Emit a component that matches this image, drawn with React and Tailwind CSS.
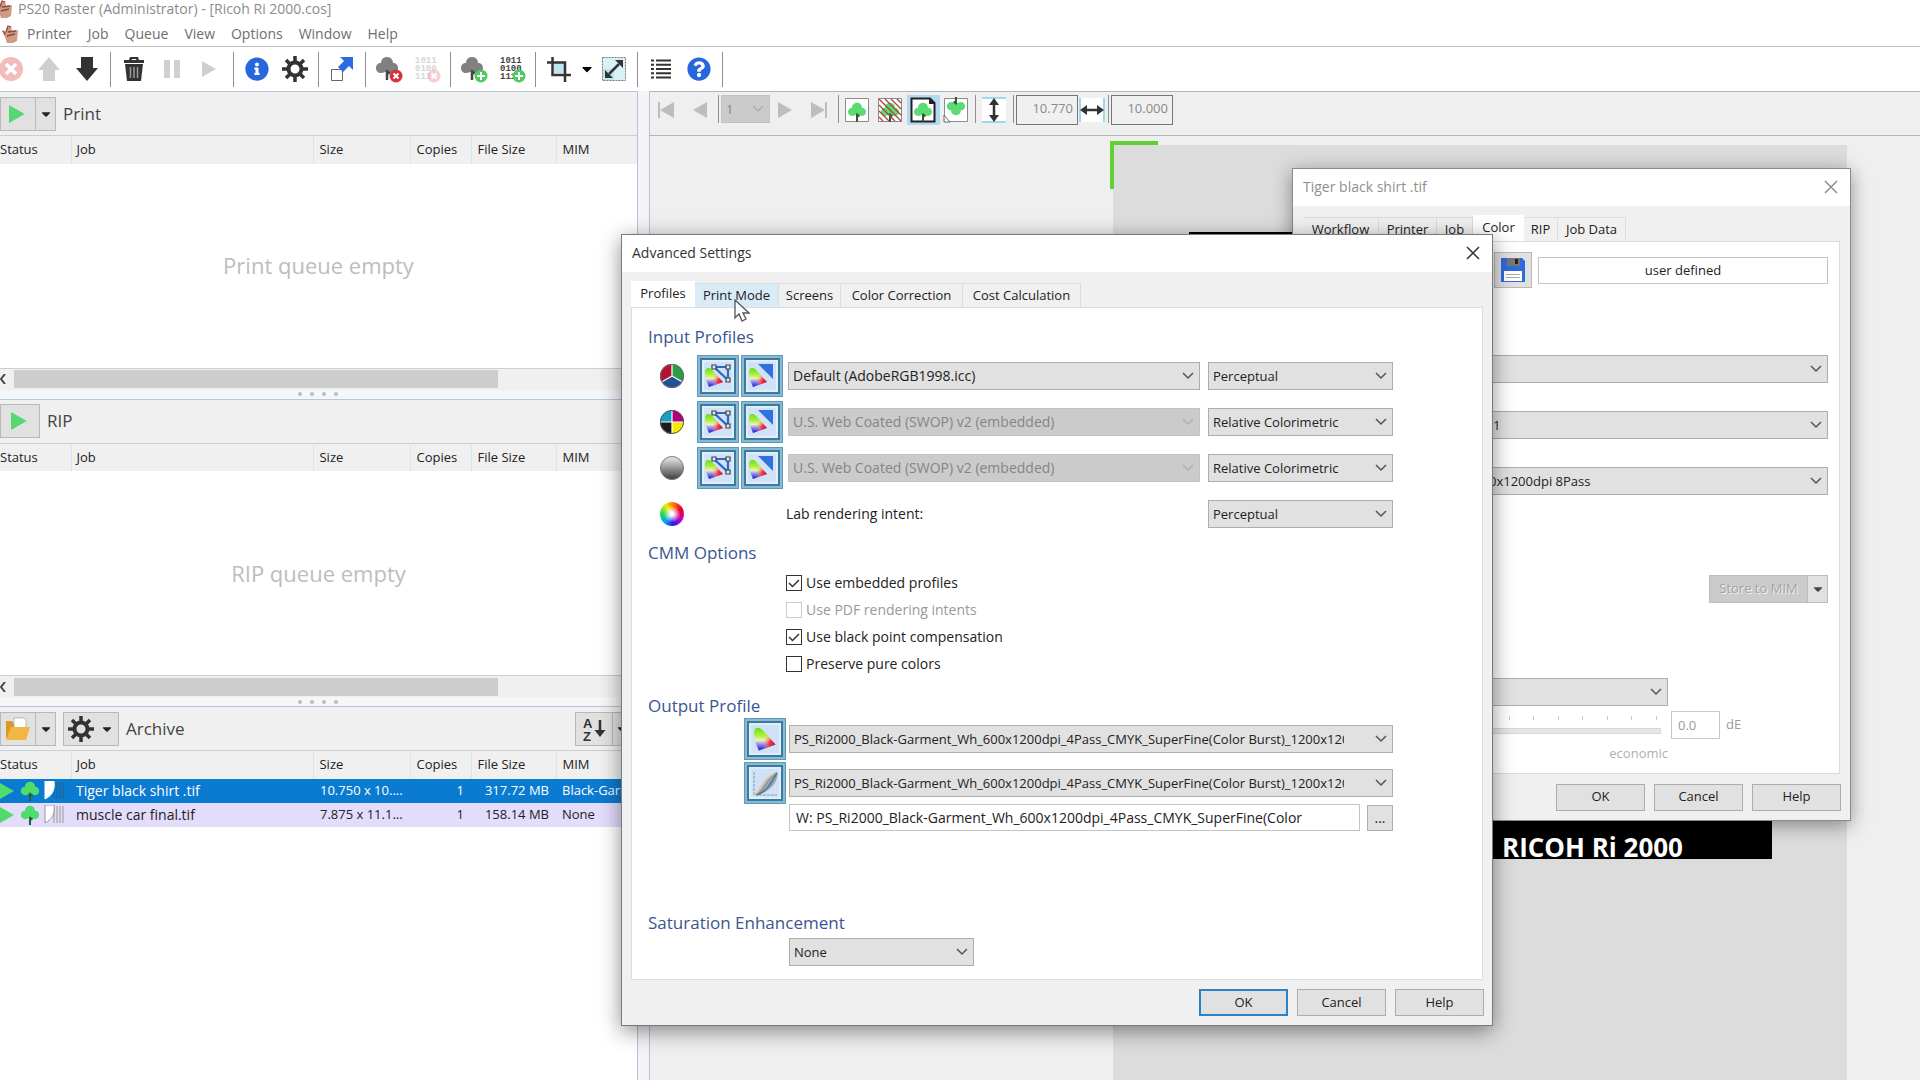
import React from "react";
import { FaInfoCircle, FaQuestionCircle, FaCaretDown } from "react-icons/fa";
import clsx from "clsx";

const PROFILE = "PS_Ri2000_Black-Garment_Wh_600x1200dpi_4Pass_CMYK_SuperFine(Color Burst)_1200x1200";

const inputProfiles = [
  { id: "rgb", name: "Default (AdobeRGB1998.icc)", intent: "Perceptual" },
  { id: "cmyk", name: "U.S. Web Coated (SWOP) v2 (embedded)", intent: "Relative Colorimetric", disabled: true },
  { id: "gray", name: "U.S. Web Coated (SWOP) v2 (embedded)", intent: "Relative Colorimetric", disabled: true },
];

const cmmOptions = [
  { id: "embedded", label: "Use embedded profiles", checked: true },
  { id: "pdf", label: "Use PDF rendering intents", disabled: true },
  { id: "blackpoint", label: "Use black point compensation", checked: true },
  { id: "pure", label: "Preserve pure colors" },
];

const archiveJobs = [
  { name: "Tiger black shirt .tif", size: "10.750 x 10....", copies: 1, fileSize: "317.72 MB", mim: "Black-Garment", selected: true },
  { name: "muscle car final.tif", size: "7.875 x 11.1...", copies: 1, fileSize: "158.14 MB", mim: "None" },
];

/* ---------- icons ---------- */

const AppIcon = () => (
  <svg viewBox="0 0 20 20" className="h-5 w-5 shrink-0">
    <path d="M2 7l4 1 1-5 4-1 1 5 6-1-1 11-4 2H7L5 13z" fill="#d09a84" />
    <path d="M6 8l2-6 3 1M7 12l8-2M8 8l8-1" stroke="#8a4a3b" strokeWidth="1.300" fill="none" />
    <path d="M2 6l4 2-1 4z" fill="#a45c4a" />
  </svg>
);

const BigArrow = ({ down, color }) => (
  <svg viewBox="0 0 24 26" className={clsx("h-[26px] w-6", down && "rotate-180")}>
    <path d="M12 1l11 13h-5v11H6V14H1z" fill={color} />
  </svg>
);

const CancelIcon = () => (
  <svg viewBox="0 0 26 26" className="h-[26px] w-[26px]">
    <circle cx="13" cy="13" r="12" fill="#f1bcbc" />
    <path d="M8 8l10 10M18 8L8 18" stroke="#fff" strokeWidth="3.500" />
  </svg>
);

const PauseIcon = () => (
  <svg viewBox="0 0 20 20" className="h-5 w-5">
    <path d="M2 1h6v18H2zM12 1h6v18h-6z" fill="#d0d0d0" />
  </svg>
);

const Triangle = ({ color, className = "h-4 w-4", left, bar }) => (
  <svg viewBox="0 0 16 16" className={clsx(className, left && "rotate-180")}>
    <path d="M0 0l14 8-14 8z" fill={color} />
    {bar && <path d="M14 0h2v16h-2z" fill={color} />}
  </svg>
);

const TrashIcon = () => (
  <svg viewBox="0 0 24 26" className="h-[26px] w-6">
    <path d="M8 1h8l1 3h5v3H2V4h5zM10 3l-.4 1h4.8L14 3z" fill="#333" />
    <path d="M3 8h18l-2 17H5z" fill="#333" />
    <path d="M8.500 11v11M12 11v11M15.500 11v11" stroke="#999" strokeWidth="1.500" />
  </svg>
);

const GearIcon = () => (
  <svg viewBox="0 0 26 26" className="h-[26px] w-[26px]">
    <circle cx="13" cy="13" r="6.500" fill="none" stroke="#333" strokeWidth="4" />
    <path
      d="M13 0v5M13 21v5M0 13h5M21 13h5M4 4l4 4M18 18l4 4M22 4l-4 4M8 18l-4 4"
      stroke="#333"
      strokeWidth="3.500"
    />
  </svg>
);

const PopOutIcon = () => (
  <svg viewBox="0 0 24 26" className="h-[26px] w-6">
    <path d="M1.500 13.500h11v11h-11z" fill="#fff" stroke="#666" />
    <path d="M10 1h13v13l-4-4-6 6-5-5 6-6z" fill="#2f6be0" />
  </svg>
);

const Badge = ({ kind, faded }) => (
  <g opacity={faded ? 0.5 : 1}>
    <circle cx="20" cy="20" r="6.500" fill={kind === "add" ? "#4fcb63" : faded ? "#f0a0a8" : "#d3343f"} />
    {kind === "add" ? (
      <path d="M20 16v8M16 20h8" stroke="#fff" strokeWidth="2" />
    ) : (
      <path d="M17.500 17.500l5 5M22.500 17.500l-5 5" stroke="#fff" strokeWidth="2" />
    )}
  </g>
);

const TreeShape = ({ fill, trunk = "#444" }) => (
  <>
    <path
      d="M11 1c4 0 6 3 6 6 3 0 5 2 5 5s-2 5-5 5c-2 0-4-1-6-2-2 1-4 2-6 2-3 0-5-2-5-5s2-5 5-5c0-3 2-6 6-6z"
      fill={fill}
    />
    <path d="M11 24V14M11 18l3-2" stroke={trunk} strokeWidth="2.500" />
  </>
);

const TreeBadgeIcon = ({ kind }) => (
  <svg viewBox="0 0 27 27" className="h-[27px] w-[27px]">
    <TreeShape fill="#808080" />
    <Badge kind={kind} />
  </svg>
);

const BinaryIcon = ({ kind, faded }) => (
  <svg viewBox="0 0 27 27" className="h-[27px] w-[27px]">
    <g fill={faded ? "#d6d6d6" : "#444"} fontFamily="Liberation Mono, monospace" fontSize="9" fontWeight="bold">
      <text x="1" y="7">1011</text>
      <text x="1" y="15">0100</text>
      <text x="1" y="23">111</text>
    </g>
    <Badge kind={kind} faded={faded} />
  </svg>
);

const CropIcon = () => (
  <svg viewBox="0 0 26 26" className="h-[26px] w-[26px]">
    <path d="M8 6h11v11H8z" fill="#bde6ee" />
    <path d="M6.500 1v18H25M1 6.500h18V26" fill="none" stroke="#333" strokeWidth="2.500" />
  </svg>
);

const FitIcon = () => (
  <svg viewBox="0 0 26 26" className="h-[26px] w-[26px]">
    <path d="M1.500 1.500h23v23h-23z" fill="#d9f1f6" stroke="#777" strokeDasharray="2 1" />
    <path d="M2 13h11v11H2z" fill="#bde6ee" />
    <path d="M8 18L18 8" stroke="#333" strokeWidth="2.500" />
    <path d="M14 4h8v8zM4 14v8h8z" fill="#333" />
  </svg>
);

const ListIcon = () => (
  <svg viewBox="0 0 20 20" className="h-5 w-5">
    <path d="M0 1.500h3M0 5.750h3M0 10h3M0 14.250h3M0 18.500h3M5 1.500h15M5 5.750h15M5 10h15M5 14.250h15M5 18.500h15" stroke="#333" strokeWidth="2" />
  </svg>
);

const PageTreeIcon = ({ variant }) => (
  <svg viewBox="0 0 26 26" className="h-[26px] w-[26px]">
    <path
      d={variant === "page" ? "M1.500 1.500H20l4.500 4.500v18.500h-23z" : "M1.500 1.500h23v23h-23z"}
      fill="#fff"
      stroke={variant === "page" ? "#222" : "#8b8b8b"}
      strokeWidth={variant === "page" ? 2 : 1}
    />
    <g transform={variant === "flip" ? "translate(22 19) rotate(180) scale(.82)" : "translate(4 5) scale(.82)"}>
      <TreeShape fill="#5bdc72" trunk="#345539" />
    </g>
    {variant === "page" && <path d="M19 1v6h6z" fill="#222" />}
    {variant === "flip" && <path d="M1 18l6 7H1z" fill="#fff" stroke="#666" />}
    {variant === "hatch" && (
      <path
        d="M2 2l22 22M8 2l16 16M14 2l10 10M20 2l4 4M2 8l16 16M2 14l10 10M2 20l4 4"
        stroke="#a8463c"
        strokeWidth="1.300"
      />
    )}
  </svg>
);

const MeasureIcon = ({ horizontal }) => (
  <svg viewBox="0 0 26 26" className={clsx("h-[26px] w-[26px]", horizontal && "rotate-90")}>
    <path d="M1 0h24v26H1z" fill="#fff" />
    <path d="M1 1h24M1 25h24" stroke="#7fcde6" strokeWidth="1.500" />
    <path d="M13 5v16" stroke="#333" strokeWidth="2.500" />
    <path d="M13 1l5 7H8zM13 25l5-7H8z" fill="#333" />
  </svg>
);

const FolderIcon = () => (
  <svg viewBox="0 0 26 24" className="h-6 w-[26px]">
    <path d="M1 4h6l2 3h12v14H1z" fill="#d99a2b" />
    <path d="M9 1h10l2 2v10H9z" fill="#fff" stroke="#999" strokeWidth=".6" />
    <path d="M6 10h19l-4 13H1z" fill="#f3b544" />
  </svg>
);

const SortIcon = () => (
  <svg viewBox="0 0 24 26" className="h-[26px] w-6">
    <g fill="#333" fontFamily="Liberation Sans, sans-serif" fontSize="13" fontWeight="bold">
      <text x="1" y="12">A</text>
      <text x="1" y="25">Z</text>
    </g>
    <path d="M18 4v13" stroke="#333" strokeWidth="2.500" />
    <path d="M12.500 14h11L18 21z" fill="#333" />
  </svg>
);

const StatusIcons = ({ selected }) => (
  <span className="flex items-center gap-1">
    <Triangle color="#4fdc6a" />
    <svg viewBox="0 0 22 24" className="h-5 w-5">
      <TreeShape fill="#4fdc6a" trunk="#24632f" />
    </svg>
    <svg viewBox="0 0 20 20" className="h-5 w-5">
      <path d="M10 1v17M13 1v17M16 1v17M19 1v17" stroke={selected ? "#25608f" : "#999"} />
      <path d="M1 0h9c1 8-1 14-9 18z" fill="#fff" stroke={selected ? "#fff" : "#999"} />
    </svg>
  </span>
);

const SaveIcon = () => (
  <svg viewBox="0 0 26 26" className="h-[26px] w-[26px]">
    <path d="M1 1h21l3 3v21H1z" fill="#2f6bdc" />
    <path d="M7 1h13v8H7z" fill="#777" />
    <path d="M15 2h3v5h-3z" fill="#222" />
    <path d="M4 14h18v10H4z" fill="#fff" />
    <path d="M6 17.500h14M6 20.500h14" stroke="#aaa" />
  </svg>
);

const FAN = "M0 9c0-3 1-5 3-5 3 0 4 2 6 4l9 10-14 5C2 18 0 14 0 9z";

const GamutIcon = ({ id, variant }) => (
  <svg viewBox="0 0 26 24" className="h-6 w-[26px] overflow-visible">
    <defs>
      <linearGradient id={`${id}-base`} x1="0.300" y1="0" x2="0.300" y2="1">
        <stop offset="0" stopColor="#5fe01f" />
        <stop offset=".35" stopColor="#b4f03c" />
        <stop offset=".55" stopColor="#e8f4c0" />
        <stop offset=".75" stopColor="#8a7bf2" />
        <stop offset="1" stopColor="#1714d0" />
      </linearGradient>
      <radialGradient id={`${id}-red`} gradientUnits="userSpaceOnUse" cx="18" cy="18" r="11">
        <stop offset="0" stopColor="#e00b2c" />
        <stop offset=".45" stopColor="#f0304a" />
        <stop offset="1" stopColor="#ffb26b" stopOpacity="0" />
      </radialGradient>
    </defs>
    <g transform={variant ? undefined : "translate(2 -4) scale(1.200)"}>
      <path d={FAN} fill={`url(#${id}-base)`} />
      <path d={FAN} fill={`url(#${id}-red)`} />
    </g>
    {variant === "points" && (
      <>
        <path d="M9 3h14v13z" fill="none" stroke="#2b68c8" strokeWidth="2.200" />
        <path d="M7 1h4v4H7zM21 1h4v4h-4zM21 14h4v4h-4z" fill="#dce9f6" stroke="#444" strokeWidth="1.200" />
      </>
    )}
    {variant === "corner" && <path d="M9 0h15v15z" fill="#3170dd" />}
  </svg>
);

const CurveIcon = () => (
  <svg viewBox="0 0 28 28" className="h-7 w-7">
    <path d="M3 3v23h23" fill="none" stroke="#8b98a5" strokeDasharray="3 1" />
    <path d="M4 26C12 21 13 10 26 3c2 9-6 19-17 22z" fill="#9aa8b5" />
    <path d="M4 26C11 19 12 9 26 3" fill="none" stroke="#d3c68c" strokeWidth="1.300" />
    <path d="M5 26C13 21 15 11 26 4" fill="none" stroke="#b07f88" />
    <path d="M6 26C17 22 21 12 26 4" fill="none" stroke="#4d7796" strokeWidth="1.500" />
  </svg>
);

const ModeIcon = ({ id }) => {
  if (id === "lab") {
    return (
      <span className="h-6 w-6 rounded-full bg-[radial-gradient(circle,#ffffff_8%,transparent_50%),conic-gradient(#ff8a00,#f00020_60deg,#d000b0_115deg,#3018e8_175deg,#00a8f0_220deg,#20d850_270deg,#e8f000_325deg,#ff8a00)]" />
    );
  }
  return (
    <svg viewBox="0 0 24 24" className="h-6 w-6">
      <defs>
        <linearGradient id="ball" x1="0" y1="0" x2="0" y2="1">
          <stop offset="0" stopColor="#eee" />
          <stop offset="1" stopColor="#3d3d3d" />
        </linearGradient>
      </defs>
      {id === "gray" && <circle cx="12" cy="12" r="11.500" fill="url(#ball)" stroke="#777" />}
      {id === "rgb" && (
        <>
          <path d="M12 12V0A12 12 0 0 0 1.600 18z" fill="#b31230" />
          <path d="M12 12V0A12 12 0 0 1 22.400 18z" fill="#2d9c49" />
          <path d="M12 12L1.600 18A12 12 0 0 0 22.400 18z" fill="#254f98" />
          <path d="M12 0v12M12 12L1.600 18M12 12l10.400 6" stroke="#fff" strokeWidth="1.200" />
          <circle cx="12" cy="12" r="11.500" fill="none" stroke="#666" />
        </>
      )}
      {id === "cmyk" && (
        <>
          <path d="M12 12V0A12 12 0 0 0 0 12z" fill="#169fc4" />
          <path d="M12 12V0A12 12 0 0 1 24 12z" fill="#b0007c" />
          <path d="M12 12H0a12 12 0 0 0 12 12z" fill="#1b1b1b" />
          <path d="M12 12h12a12 12 0 0 1-12 12z" fill="#f5ea00" />
          <path d="M12 0v24M0 12h24" stroke="#fff" strokeWidth="1.200" />
          <circle cx="12" cy="12" r="11.500" fill="none" stroke="#555" />
        </>
      )}
    </svg>
  );
};

const CloseIcon = () => (
  <svg viewBox="0 0 14 14" className="h-3.5 w-3.5">
    <path d="M1 1l12 12M13 1L1 13" stroke="currentColor" strokeWidth="1.500" />
  </svg>
);

/* ---------- shared controls ---------- */

const ToolButton = ({ label, children, className }) => (
  <button type="button" aria-label={label} className={clsx("flex items-center justify-center", className || "h-9 w-[38px]")}>
    {children}
  </button>
);

const Sep = ({ small }) => <span className={clsx("w-px shrink-0 bg-[#8f8f8f]", small ? "mx-0.5 h-7" : "mx-1 h-[35px]")} />;

const Select = ({ label, value, disabled, className, pad = "pr-6 pl-1", size = "text-[13px]" }) => (
  <div className={clsx("relative h-7 min-w-0", className)}>
    <select
      aria-label={label}
      disabled={disabled}
      className={clsx(
        "block h-full w-full appearance-none border leading-5 opacity-100",
        pad,
        size,
        disabled ? "border-[#c2c2c2] bg-[#cbcbcb] text-[#858585]" : "border-[#adadad] bg-[#e1e1e1] text-[#222]"
      )}>
      <option>{value}</option>
    </select>
    <svg viewBox="0 0 12 8" className="pointer-events-none absolute top-2.5 right-1.5 h-2 w-3">
      <path d="M1 1l5 5 5-5" fill="none" stroke={disabled ? "#b0b0b0" : "#555"} strokeWidth="1.500" />
    </svg>
  </div>
);

const PushButton = ({ children, primary }) => (
  <button
    type="button"
    className={clsx(
      "h-[27px] w-[89px] bg-[#e1e1e1] text-[13px] text-[#222]",
      primary ? "border-2 border-[#2b83c4]" : "border border-[#adadad]"
    )}>
    {children}
  </button>
);

const Tabs = ({ items, active, hovered }) => (
  <div role="tablist" className="flex h-[26px] items-end">
    {items.map(([name, width]) => (
      <button
        key={name}
        type="button"
        role="tab"
        aria-selected={name === active}
        className={clsx(
          "text-[13px] whitespace-nowrap text-[#222]",
          width,
          name === active && "h-[26px] bg-white",
          name !== active && "h-6 border-t border-r border-[#dcdcdc]",
          name !== active && (name === hovered ? "bg-[#d9ebf7]" : "bg-[#f0f0f0]")
        )}>
        {name}
      </button>
    ))}
  </div>
);

const ToggleButton = ({ label, children }) => (
  <button
    type="button"
    aria-label={label}
    aria-pressed="true"
    className="flex h-[42px] w-[42px] shrink-0 items-center justify-center border border-[#5f99b8] bg-[#cfe2f6] shadow-[inset_0_0_0_2px_#8ab9d2,inset_0_0_0_4px_#3a7ba2,inset_0_0_0_6px_#e1eefa]">
    {children}
  </button>
);

const Heading = ({ children, className }) => (
  <h2 className={clsx("text-[17px] leading-6 text-[#3b5591]", className)}>{children}</h2>
);

/* ---------- main window ---------- */

const menus = ["Printer", "Job", "Queue", "View", "Options", "Window", "Help"];

const MainToolbar = () => (
  <div className="-ml-2 flex h-11 items-center">
    <ToolButton label="Cancel job"><CancelIcon /></ToolButton>
    <ToolButton label="Move up"><BigArrow color="#cfcfcf" /></ToolButton>
    <ToolButton label="Move down"><BigArrow color="#333" down /></ToolButton>
    <Sep />
    <ToolButton label="Delete"><TrashIcon /></ToolButton>
    <ToolButton label="Pause"><PauseIcon /></ToolButton>
    <ToolButton label="Resume"><Triangle color="#cfcfcf" /></ToolButton>
    <Sep />
    <ToolButton label="Info"><FaInfoCircle className="h-6 w-6 text-[#2766dd]" /></ToolButton>
    <ToolButton label="Settings"><GearIcon /></ToolButton>
    <Sep />
    <ToolButton label="Export"><PopOutIcon /></ToolButton>
    <Sep />
    <ToolButton label="Remove preview"><TreeBadgeIcon kind="remove" /></ToolButton>
    <ToolButton label="Remove raster"><BinaryIcon kind="remove" faded /></ToolButton>
    <Sep />
    <ToolButton label="Create preview"><TreeBadgeIcon kind="add" /></ToolButton>
    <ToolButton label="Create raster"><BinaryIcon kind="add" /></ToolButton>
    <Sep />
    <ToolButton label="Crop"><CropIcon /></ToolButton>
    <ToolButton label="Crop options" className="h-9 w-[17px]"><FaCaretDown className="h-4 w-4" /></ToolButton>
    <ToolButton label="Fit"><FitIcon /></ToolButton>
    <Sep />
    <ToolButton label="List"><ListIcon /></ToolButton>
    <ToolButton label="Help"><FaQuestionCircle className="h-6 w-6 text-[#2766dd]" /></ToolButton>
    <Sep />
  </div>
);

const QueueTable = ({ label, rows = [] }) => (
  <table aria-label={label} className="w-full table-fixed border-collapse text-[13px] text-[#222]">
    <colgroup>
      <col className="w-[71px]" />
      <col />
      <col className="w-[97px]" />
      <col className="w-[61px]" />
      <col className="w-[85px]" />
      <col className="w-20" />
    </colgroup>
    <thead>
      <tr className="h-7 border-t border-[#c5cedf] bg-[#f0f0f0] text-left">
        {["Status", "Job", "Size", "Copies", "File Size", "MIM"].map((h) => (
          <th
            key={h}
            className={clsx("overflow-hidden font-normal whitespace-nowrap", h === "Status" ? "pl-0" : "border-l border-[#dfe3ea] pl-[5px]")}>
            {h}
          </th>
        ))}
      </tr>
    </thead>
    <tbody>
      {rows.map((job) => (
        <tr key={job.name} className={clsx("h-6 whitespace-nowrap", job.selected ? "bg-[#0b7bd2] text-white" : "bg-[#e3dcfb]")}>
          <td className="p-0"><StatusIcons selected={job.selected} /></td>
          <td className="pl-[5px] text-sm">{job.name}</td>
          <td className="pl-1.5">{job.size}</td>
          <td className="pr-2 text-right">{job.copies}</td>
          <td className="pr-2 text-right">{job.fileSize}</td>
          <td className="overflow-hidden pl-[5px]">{job.mim}</td>
        </tr>
      ))}
    </tbody>
  </table>
);

const Splitter = () => (
  <>
    <div className="flex h-[22px] items-center border-t border-[#c5cedf] bg-[#f0f0f0]">
      <svg viewBox="0 0 6 10" className="mr-2 h-2.5 w-1.5">
        <path d="M5 0L1 5l4 5" fill="none" stroke="#444" strokeWidth="2" />
      </svg>
      <div className="h-[18px] w-[76%] bg-[#cdcdcd]" />
    </div>
    <div className="flex h-[9px] items-center justify-center gap-2 bg-[#f5f6f8]">
      {[0, 1, 2, 3].map((i) => (
        <span key={i} className="h-1 w-1 rounded-full bg-[#bdbdbd]" />
      ))}
    </div>
  </>
);

const PaneButton = ({ label, children, className }) => (
  <button
    type="button"
    aria-label={label}
    className={clsx("flex h-[34px] items-center justify-center border border-[#b8b8b8] bg-[#e1e1e1] text-[#222]", className)}>
    {children}
  </button>
);

const PaneHeader = ({ children }) => (
  <div className="flex h-11 items-center border-t border-[#b9c5da] bg-[#f0f0f0] text-[17px] text-[#444]">{children}</div>
);

const EmptyQueue = ({ children }) => (
  <div className="flex h-[204px] items-center justify-center bg-white text-[22px] text-[#bdbdbd]">{children}</div>
);

const QueuePane = () => (
  <aside className="w-1/3 shrink-0 pr-0.5">
    <div className="flex h-full flex-col border-r border-[#b9c0d6]">
      <PaneHeader>
        <PaneButton label="Start printing" className="w-9"><Triangle color="#57d774" className="h-[18px] w-[18px]" /></PaneButton>
        <PaneButton label="Print options" className="w-5 border-l-0"><FaCaretDown className="h-3.5 w-3.5" /></PaneButton>
        <span className="ml-[7px]">Print</span>
      </PaneHeader>
      <QueueTable label="Print queue" />
      <EmptyQueue>Print queue empty</EmptyQueue>
      <Splitter />
      <PaneHeader>
        <PaneButton label="Start RIP" className="w-10"><Triangle color="#57d774" className="h-[18px] w-[18px]" /></PaneButton>
        <span className="ml-[7px]">RIP</span>
      </PaneHeader>
      <QueueTable label="RIP queue" />
      <EmptyQueue>RIP queue empty</EmptyQueue>
      <Splitter />
      <PaneHeader>
        <PaneButton label="Open folder" className="w-9"><FolderIcon /></PaneButton>
        <PaneButton label="Folder options" className="w-5 border-l-0"><FaCaretDown className="h-3.5 w-3.5" /></PaneButton>
        <PaneButton label="Archive settings" className="ml-[7px] w-14 gap-1.5"><GearIcon /><FaCaretDown className="h-3.5 w-3.5" /></PaneButton>
        <span className="ml-[7px]">Archive</span>
        <PaneButton label="Sort" className="ml-auto w-[38px]"><SortIcon /></PaneButton>
        <PaneButton label="Sort options" className="mr-1 w-5 border-l-0"><FaCaretDown className="h-3.5 w-3.5" /></PaneButton>
      </PaneHeader>
      <QueueTable label="Archive" rows={archiveJobs} />
      <div className="flex-1 bg-white" />
    </div>
  </aside>
);

const previewBtn = "h-[30px] w-[33px]";
const sizeField = "h-[30px] w-[62px] border border-[#777] bg-[#f0f0f0] pr-1 pb-1 text-right text-[13px] text-[#8a8a8a]";

const PreviewToolbar = () => (
  <div className="flex h-[45px] items-start border-t border-b border-[#b4b4b4] pt-[3px]">
    <ToolButton label="First page" className={previewBtn}><Triangle color="#bdbdbd" left bar /></ToolButton>
    <ToolButton label="Previous page" className={previewBtn}><Triangle color="#bdbdbd" left /></ToolButton>
    <Sep small />
    <Select label="Page" value="1" disabled className="w-[49px]" />
    <ToolButton label="Next page" className={previewBtn}><Triangle color="#bdbdbd" /></ToolButton>
    <ToolButton label="Last page" className={previewBtn}><Triangle color="#bdbdbd" bar /></ToolButton>
    <Sep small />
    <ToolButton label="Show preview" className={previewBtn}><PageTreeIcon variant="plain" /></ToolButton>
    <ToolButton label="Show overlay" className={previewBtn}><PageTreeIcon variant="hatch" /></ToolButton>
    <ToolButton label="Show page" className={clsx(previewBtn, "bg-[#b5d9f1]")}><PageTreeIcon variant="page" /></ToolButton>
    <ToolButton label="Rotate" className={previewBtn}><PageTreeIcon variant="flip" /></ToolButton>
    <Sep small />
    <ToolButton label="Height" className={previewBtn}><MeasureIcon /></ToolButton>
    <Sep small />
    <input aria-label="Height value" readOnly value="10.770" className={sizeField} />
    <ToolButton label="Width" className="h-[30px] w-7"><MeasureIcon horizontal /></ToolButton>
    <Sep small />
    <input aria-label="Width value" readOnly value="10.000" className={sizeField} />
  </div>
);

const PreviewPane = () => (
  <main className="ml-[9px] flex min-w-0 flex-1 flex-col border-l border-[#b9c0d6] bg-[#efefef]">
    <PreviewToolbar />
    <div className="relative flex-1 overflow-hidden">
      <div className="absolute top-[9px] bottom-0 left-[463px] w-[734px] bg-[#dcdcdc]">
        <div className="absolute top-[87px] left-[76px] flex h-[627px] w-[583px] items-end justify-end overflow-hidden bg-black pr-[89px]">
          <span className="h-7 text-[26px] leading-8 font-bold whitespace-nowrap text-white">RICOH Ri 2000</span>
        </div>
      </div>
      <div className="absolute top-[5px] left-[460px] h-12 w-12 border-t-4 border-l-4 border-[#62cf35]" />
    </div>
  </main>
);

/* ---------- job dialog ---------- */

const JobDialog = () => (
  <section
    role="dialog"
    aria-label="Tiger black shirt .tif"
    className="absolute top-[168px] left-[1292px] w-[559px] border border-[#8a8a8a] bg-[#f0f0f0] shadow-[0_4px_18px_rgba(0,0,0,0.4)]">
    <header className="flex h-[37px] items-center justify-between bg-white pr-3 pb-0.5 pl-2.5 text-sm text-[#8f8f8f]">
      <span>Tiger black shirt .tif</span>
      <button type="button" aria-label="Close"><CloseIcon /></button>
    </header>
    <div className="px-2.5 pt-[9px]">
      <Tabs
        active="Color"
        items={[
          ["Workflow", "w-[76px]"],
          ["Printer", "w-[58px]"],
          ["Job", "w-9"],
          ["Color", "w-[51px]"],
          ["RIP", "w-[34px]"],
          ["Job Data", "w-[68px]"],
        ]}
      />
      <div className="flex h-[533px] flex-col border border-[#dcdcdc] bg-white pt-2.5 pr-[11px] pl-[176px]">
        <div className="flex items-center justify-end gap-1.5">
          <button type="button" aria-label="Save preset" className="flex h-9 w-[38px] items-center justify-center border border-[#b8b8b8] bg-[#e1e1e1]">
            <SaveIcon />
          </button>
          <input aria-label="Preset name" readOnly value="user defined" className="h-[27px] w-[290px] border border-[#c4c4c4] text-center text-[13px] text-[#222]" />
        </div>
        <div className="mt-[67px] flex flex-col gap-7">
          <Select label="Preset" value="" />
          <Select label="Media" value="1" pad="pr-6 pl-3" />
          <Select label="Resolution" value="0x1200dpi 8Pass" pad="pr-6 pl-2" />
        </div>
        <div className="mt-20 flex justify-end">
          <button type="button" disabled className="h-7 w-[99px] border border-[#bcbcbc] bg-[#cbcbcb] text-[13px] text-[#a3a3a3] [text-shadow:1px_1px_0_#f4f4f4]">
            Store to MIM
          </button>
          <button type="button" aria-label="Store options" className="flex h-7 w-5 items-center justify-center border border-l-0 border-[#bcbcbc] bg-[#e1e1e1] text-[#444]">
            <FaCaretDown className="h-3.5 w-3.5" />
          </button>
        </div>
        <Select label="Ink mode" value="" className="mt-[75px] mr-40 shrink-0" />
        <div className="mt-[5px] flex items-center gap-1.5 text-[13px] text-[#9a9a9a]">
          <div className="flex flex-1 flex-col gap-2 pr-1">
            <div className="flex justify-between px-1">
              {[0, 1, 2, 3, 4, 5, 6, 7].map((i) => (
                <span key={i} className="h-1 w-px bg-[#c4c4c4]" />
              ))}
            </div>
            <input
              aria-label="Ink saving"
              type="range"
              defaultValue={0}
              className="h-1.5 w-full appearance-none border border-[#d6d6d6] bg-[#e7e7e7] [&::-webkit-slider-thumb]:h-1 [&::-webkit-slider-thumb]:w-1 [&::-webkit-slider-thumb]:appearance-none [&::-webkit-slider-thumb]:bg-[#ccc]"
            />
          </div>
          <input aria-label="Delta E" readOnly value="0.0" className="h-7 w-[49px] border border-[#c8c8c8] pl-1.5 text-[13px]" />
          <span className="w-[102px]">dE</span>
        </div>
        <p className="mt-1 mr-40 text-right text-[13px] leading-5 text-[#b0b0b0]">economic</p>
      </div>
    </div>
    <footer className="flex h-[46px] items-center justify-end gap-[9px] pr-[9px]">
      <PushButton>OK</PushButton>
      <PushButton>Cancel</PushButton>
      <PushButton>Help</PushButton>
    </footer>
  </section>
);

/* ---------- advanced settings dialog ---------- */

const AdvancedDialog = () => (
  <section
    role="dialog"
    aria-label="Advanced Settings"
    className="absolute top-[234px] left-[621px] w-[872px] border border-[#7a7a7a] bg-[#f0f0f0] shadow-[0_5px_20px_rgba(0,0,0,0.45)]">
    <header className="flex h-[37px] items-center justify-between bg-white pr-3 pb-0.5 pl-2.5 text-sm text-[#333]">
      <span>Advanced Settings</span>
      <button type="button" aria-label="Close"><CloseIcon /></button>
    </header>
    <div className="px-[9px] pt-[9px]">
      <Tabs
        active="Profiles"
        hovered="Print Mode"
        items={[
          ["Profiles", "w-16"],
          ["Print Mode", "w-[84px]"],
          ["Screens", "w-[62px]"],
          ["Color Correction", "w-[122px]"],
          ["Cost Calculation", "w-[118px]"],
        ]}
      />
      <div className="border border-[#dcdcdc] bg-white pt-[17px] pr-[89px] pb-[13px] pl-4 text-sm text-[#222]">
        <Heading>Input Profiles</Heading>
        <div className="mt-1.5 flex flex-col gap-1">
          {inputProfiles.map((p) => (
            <div key={p.id} className="flex items-center gap-[5px]">
              <div className="flex w-11 justify-center pl-1"><ModeIcon id={p.id} /></div>
              <div className="flex gap-0.5">
                <ToggleButton label="Use profile"><GamutIcon id={`${p.id}-a`} variant="points" /></ToggleButton>
                <ToggleButton label="Use correction"><GamutIcon id={`${p.id}-b`} variant="corner" /></ToggleButton>
              </div>
              <Select label={`${p.id} profile`} value={p.name} disabled={p.disabled} size="text-sm" className="flex-1" />
              <Select label={`${p.id} rendering intent`} value={p.intent} className="ml-[3px] w-[185px]" />
            </div>
          ))}
          <div className="flex h-[42px] items-center">
            <div className="flex w-12 justify-center"><ModeIcon id="lab" /></div>
            <span className="ml-[90px] flex-1">Lab rendering intent:</span>
            <Select label="Lab rendering intent" value="Perceptual" className="w-[185px]" />
          </div>
        </div>

        <Heading className="mt-1.5">CMM Options</Heading>
        <div className="mt-1 flex flex-col pl-[138px]">
          {cmmOptions.map((o) => (
            <label key={o.id} className={clsx("relative flex h-[27px] items-center gap-1", o.disabled && "text-[#999]")}>
              <input
                type="checkbox"
                defaultChecked={o.checked}
                disabled={o.disabled}
                className="peer h-4 w-4 appearance-none border border-[#333] bg-white disabled:border-[#ccc]"
              />
              <svg viewBox="0 0 16 16" className="pointer-events-none absolute left-0 hidden h-4 w-4 peer-checked:block">
                <path d="M3 8l3.500 3.500L13 5" fill="none" stroke="#333" strokeWidth="1.500" />
              </svg>
              {o.label}
            </label>
          ))}
        </div>

        <Heading className="mt-[17px]">Output Profile</Heading>
        <div className="flex flex-col pl-24">
          <div className="flex items-center gap-[3px]">
            <ToggleButton label="Output profile"><GamutIcon id="out" /></ToggleButton>
            <Select label="Output profile" value={PROFILE} pad="pr-12 pl-1" className="flex-1" />
          </div>
          <div className="mt-0.5 flex items-center gap-[3px]">
            <ToggleButton label="Linearization"><CurveIcon /></ToggleButton>
            <Select label="Linearization" value={PROFILE} pad="pr-12 pl-1" className="flex-1" />
          </div>
          <div className="flex items-center gap-[7px] pl-[45px]">
            <input
              aria-label="White profile"
              readOnly
              value="W: PS_Ri2000_Black-Garment_Wh_600x1200dpi_4Pass_CMYK_SuperFine(Color"
              className="h-[27px] min-w-0 flex-1 border border-[#c4c4c4] pl-1.5"
            />
            <button type="button" aria-label="Browse" className="h-[26px] w-[26px] border border-[#adadad] bg-[#e1e1e1]">...</button>
          </div>
        </div>

        <Heading className="mt-20">Saturation Enhancement</Heading>
        <Select label="Saturation enhancement" value="None" className="mt-[3px] ml-[141px] w-[185px]" />
      </div>
    </div>
    <footer className="flex h-[45px] items-center justify-end gap-[9px] pr-2">
      <PushButton primary>OK</PushButton>
      <PushButton>Cancel</PushButton>
      <PushButton>Help</PushButton>
    </footer>
  </section>
);

const Cursor = () => (
  <svg viewBox="0 0 16 24" className="pointer-events-none absolute top-[299px] left-[734px] h-6 w-4">
    <path d="M1 1v18l4-4 3 7 4-2-3-6h6z" fill="#fff" stroke="#555" strokeWidth="1.300" />
  </svg>
);

export default function App() {
  return (
    <div className="relative flex h-screen flex-col overflow-hidden bg-white font-['Open_Sans',sans-serif]">
      <div className="flex h-[18px] items-center text-[13px] leading-[18px] text-[#8c8c8c]">
        <span className="mr-1 -ml-1.5"><AppIcon /></span>
        <h1 className="text-sm">PS20 Raster (Administrator) - [Ricoh Ri 2000.cos]</h1>
      </div>
      <nav className="flex h-[29px] items-center gap-4 border-b border-[#bdbdbd] pt-1 text-sm text-[#6e6e6e]">
        <span className="-mr-[9px]"><AppIcon /></span>
        {menus.map((m) => (
          <a key={m} href="#">{m}</a>
        ))}
      </nav>
      <MainToolbar />
      <div className="flex min-h-0 flex-1 bg-[#f3f4f8]">
        <QueuePane />
        <PreviewPane />
      </div>
      <JobDialog />
      <AdvancedDialog />
      <Cursor />
    </div>
  );
}
